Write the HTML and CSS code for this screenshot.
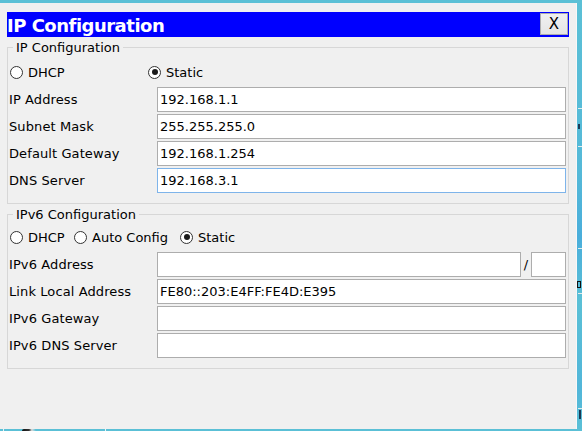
FILE: index.html
```html
<!DOCTYPE html>
<html lang="en">
<head>
<meta charset="utf-8">
<title>IP Configuration</title>
<link rel="stylesheet" href="styles.css">
</head>
<body>
<div class="desktop">
  <div class="window">
    <div class="titlebar">
      <h1 class="title">IP Configuration</h1>
      <button class="close" type="button">X</button>
    </div>

    <fieldset class="group group-ipv4">
      <legend class="legend">IP Configuration</legend>
      <div class="radios radios-ipv4">
        <label class="radio-item"><span class="radio"></span>DHCP</label>
        <label class="radio-item"><span class="radio radio-on"></span>Static</label>
      </div>
      <div class="form">
        <span class="label">IP Address</span>
        <div class="field">192.168.1.1</div>
        <span class="label">Subnet Mask</span>
        <div class="field">255.255.255.0</div>
        <span class="label">Default Gateway</span>
        <div class="field">192.168.1.254</div>
        <span class="label">DNS Server</span>
        <div class="field field-focus">192.168.3.1</div>
      </div>
    </fieldset>

    <fieldset class="group group-ipv6">
      <legend class="legend">IPv6 Configuration</legend>
      <div class="radios radios-ipv6">
        <label class="radio-item"><span class="radio"></span>DHCP</label>
        <label class="radio-item"><span class="radio"></span>Auto Config</label>
        <label class="radio-item"><span class="radio radio-on"></span>Static</label>
      </div>
      <div class="form">
        <span class="label">IPv6 Address</span>
        <div class="field-split">
          <div class="field field-grow"></div>
          <span class="slash">/</span>
          <div class="field field-prefix"></div>
        </div>
        <span class="label">Link Local Address</span>
        <div class="field">FE80::203:E4FF:FE4D:E395</div>
        <span class="label">IPv6 Gateway</span>
        <div class="field"></div>
        <span class="label">IPv6 DNS Server</span>
        <div class="field"></div>
      </div>
    </fieldset>
  </div>

  <span class="mark mark-line mark-l1"></span>
  <span class="mark mark-line mark-l2"></span>
  <span class="mark mark-line mark-l3"></span>
  <span class="mark mark-line mark-l4"></span>
  <span class="mark mark-line mark-l5"></span>
  <span class="mark mark-dark mark-d1"></span>
  <span class="mark mark-box mark-d2"></span>
  <span class="mark mark-dark mark-d3"></span>
  <span class="mark mark-vline mark-v1"></span>
  <span class="mark mark-vline mark-v2"></span>
  <span class="mark mark-blob"></span>
</div>
</body>
</html>
```

FILE: styles.css
```css
html, body {
  margin: 0;
  padding: 0;
}

body {
  font-family: "DejaVu Sans", "Noto Sans", sans-serif;
  font-size: 13px;
  color: #000;
  background: #5bc0d6;
  overflow: hidden;
}

.desktop {
  position: relative;
  width: 582px;
  height: 431px;
  padding-top: 3px;
  box-sizing: border-box;
  background: linear-gradient(180deg, #5bc0d6 0%, #55b9d8 40%, #4aaedb 55%, #5bc0d6 70%, #52b6d9 90%, #5bc0d6 100%);
}

.window {
  width: 577px;
  height: 426px;
  box-sizing: border-box;
  background: #f0f0f0;
  border-right: 1px solid #f8f8f8;
  padding: 9px 7px 0 7px;
  display: flex;
  flex-direction: column;
}

.titlebar {
  height: 25px;
  background: #0000ff;
  display: flex;
  justify-content: space-between;
  align-items: flex-start;
  flex: none;
}

.title {
  margin: 0;
  padding-top: 2px;
  font-family: "DejaVu Sans", sans-serif;
  font-weight: bold;
  font-size: 18px;
  letter-spacing: -0.5px;
  line-height: 23px;
  color: #fff;
  white-space: nowrap;
}

.close {
  margin: 1px 1px 0 0;
  width: 28px;
  height: 22px;
  padding: 0;
  box-sizing: border-box;
  border: 1px solid #adadad;
  background: linear-gradient(180deg, #f0f0f0 0%, #e5e5e5 100%);
  font-family: "DejaVu Sans", sans-serif;
  font-size: 15px;
  line-height: 20px;
  color: #000;
  text-align: center;
}

.group {
  margin: 3px 0 0 0;
  border: 1px solid #d7d7d7;
  padding: 7px 2px 10px 1px;
  min-width: 0;
  flex: none;
}

.group-ipv6 {
  padding-top: 5px;
}

.legend {
  margin-left: 4px;
  padding: 0 3px;
  line-height: 15px;
  font-size: 13px;
  color: #000;
}

.radios {
  height: 20px;
  margin-bottom: 5px;
  display: grid;
  align-items: center;
}

.radios-ipv4 {
  grid-template-columns: 138px auto;
}

.radios-ipv6 {
  grid-template-columns: 64px 106px auto;
}

.radio-item {
  display: flex;
  align-items: center;
  gap: 5px;
  white-space: nowrap;
  line-height: 15px;
}

.radio {
  margin-left: 1px;
  width: 13px;
  height: 13px;
  box-sizing: border-box;
  border: 1px solid #333;
  border-radius: 50%;
  background: #fff;
  display: flex;
  align-items: center;
  justify-content: center;
  flex: none;
}

.radio-on::after {
  content: "";
  width: 6px;
  height: 6px;
  border-radius: 50%;
  background: #1a1a1a;
}

.form {
  display: grid;
  grid-template-columns: 148px 1fr;
  grid-auto-rows: 25px;
  row-gap: 2px;
  align-items: center;
}

.label {
  white-space: nowrap;
  letter-spacing: 0.1px;
}

.field {
  height: 25px;
  box-sizing: border-box;
  border: 1px solid #adadad;
  background: #fff;
  padding: 0 2px;
  line-height: 23px;
  white-space: nowrap;
  overflow: hidden;
}

.field-focus {
  border-color: #7eb4ea;
}

.field-split {
  display: flex;
  align-items: center;
  height: 25px;
}

.field-grow {
  flex: 1;
}

.slash {
  width: 10px;
  text-align: center;
}

.field-prefix {
  width: 35px;
  flex: none;
}

.mark {
  position: absolute;
  display: block;
}

.mark-line {
  left: 578px;
  width: 4px;
  height: 1px;
  background: #e4ecec;
}

.mark-l1 { top: 108px; }
.mark-l2 { top: 146px; }
.mark-l3 { top: 248px; }
.mark-l4 { top: 293px; }
.mark-l5 { top: 408px; }

.mark-dark {
  background: #1b3a55;
}

.mark-d1 {
  left: 578px;
  top: 124px;
  width: 2px;
  height: 5px;
}

.mark-d3 {
  left: 579px;
  top: 410px;
  width: 2px;
  height: 9px;
}

.mark-box {
  left: 577px;
  top: 281px;
  width: 4px;
  height: 7px;
  box-sizing: border-box;
  border: 1px solid #111;
}

.mark-vline {
  top: 429px;
  width: 1px;
  height: 2px;
  background: #e8f4f6;
}

.mark-v1 { left: 3px; }
.mark-v2 { left: 105px; }

.mark-blob {
  left: 22px;
  top: 429px;
  width: 14px;
  height: 2px;
  background: linear-gradient(90deg, #111 0%, #333 50%, #ddd 70%, #5bc0d6 100%);
  border-radius: 6px 6px 0 0;
}
```
